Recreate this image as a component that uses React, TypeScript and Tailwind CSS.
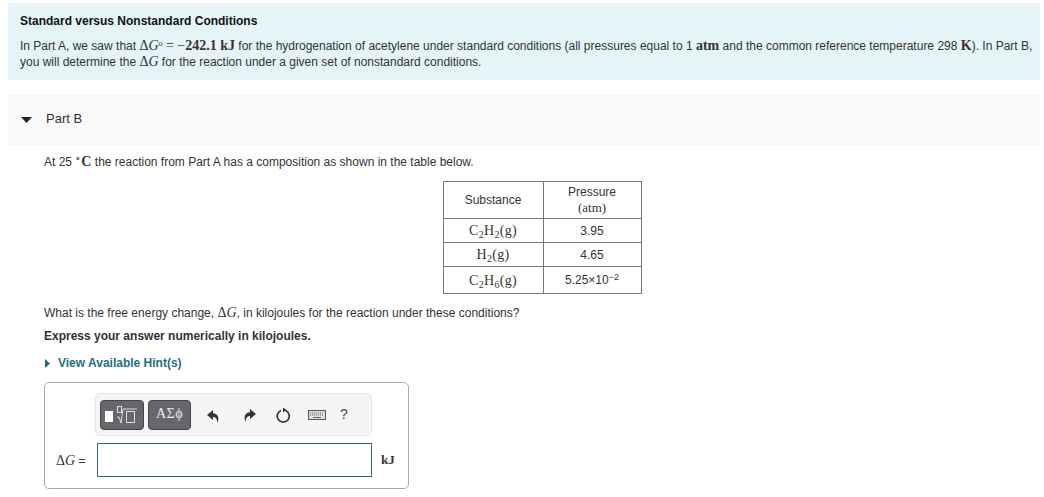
const M = ({ children, b }: { children: React.ReactNode; b?: boolean }) => (
  <span className={`font-['Liberation_Serif',serif] text-[14px] ${b ? "font-bold" : ""}`}>{children}</span>
);
const V = ({ children }: { children: React.ReactNode }) => (
  <span className="font-['Liberation_Serif',serif] text-[14px] italic">{children}</span>
);
const Sub = ({ children }: { children: React.ReactNode }) => (
  <span className="relative top-[3px] text-[10px] leading-[0]">{children}</span>
);
const Chem = ({ children }: { children: React.ReactNode }) => (
  <span className="font-['Liberation_Serif',serif] text-[14px] tracking-[0.3px] text-[#333]">{children}</span>
);

export default function App() {
  return (
    <div className="w-[1044px] h-[497px] bg-white overflow-hidden pt-[3px] pl-[8px] pr-[4px] font-['Liberation_Sans',sans-serif] text-[12px] text-[#333]">
      <div className="bg-[#e5f4f7] h-[77px] pl-[12px] pr-[4px] pt-[11px]">
        <div className="font-bold text-[#111] leading-[15px]">Standard versus Nonstandard Conditions</div>
        <p className="mt-[9px] leading-[16px] whitespace-nowrap">
          In Part A, we saw that <V><span className="not-italic">Δ</span>G</V><sup className="text-[8px] font-['Liberation_Serif',serif] leading-[0]">o</sup> <M>= −</M><M b>242.1 kJ</M> for the hydrogenation of acetylene under standard conditions (all pressures equal to 1 <M b>atm</M> and the common reference temperature 298 <M b>K</M>). In Part B,
          <br />
          you will determine the <V><span className="not-italic">Δ</span>G</V> for the reaction under a given set of nonstandard conditions.
        </p>
      </div>

      <div className="mt-[14px] h-[51px] bg-[#f8f8f8] flex items-center pl-[13px]">
        <svg width="11" height="6" viewBox="0 0 11 6" className="mt-[1px]"><path d="M0 0h11L5.500 6z" fill="#222" /></svg>
        <span className="ml-[14px] text-[13px] leading-[16px] -mt-[2px]">Part B</span>
      </div>

      <div className="pl-[36px]">
        <p className="mt-[9px] leading-[16px]">At 25 <sup className="text-[9px] leading-[0] font-['Liberation_Serif',serif]">∘</sup><M b>C</M> the reaction from Part A has a composition as shown in the table below.</p>

        <div className="flex justify-center mt-[11px]">
          <table className="border-collapse text-center w-[199px] table-fixed">
            <tbody>
              <tr className="h-[37px]">
                <td className="border border-[#777] w-[100px]">Substance</td>
                <td className="border border-[#777] leading-[15px]">Pressure<br /><span className="font-['Liberation_Serif',serif] text-[13px]">(atm)</span></td>
              </tr>
              <tr className="h-[24px]">
                <td className="border border-[#777]"><Chem>C<Sub>2</Sub>H<Sub>2</Sub>(g)</Chem></td>
                <td className="border border-[#777]">3.95</td>
              </tr>
              <tr className="h-[24px]">
                <td className="border border-[#777]"><Chem>H<Sub>2</Sub>(g)</Chem></td>
                <td className="border border-[#777]">4.65</td>
              </tr>
              <tr className="h-[27px]">
                <td className="border border-[#777]"><Chem>C<Sub>2</Sub>H<Sub>6</Sub>(g)</Chem></td>
                <td className="border border-[#777]">5.25×10<sup className="text-[9px] leading-[0]">−2</sup></td>
              </tr>
            </tbody>
          </table>
        </div>

        <p className="mt-[11px] leading-[16px]">What is the free energy change, <V><span className="not-italic">Δ</span>G</V>, in kilojoules for the reaction under these conditions?</p>
        <p className="mt-[7px] leading-[16px] font-bold">Express your answer numerically in kilojoules.</p>
        <div className="mt-[11px] flex items-center h-[16px] text-[#1f6f82] font-bold">
          <svg width="5" height="9" viewBox="0 0 5 9" className="ml-[1px]"><path d="M0 0l5 4.500L0 9z" fill="#1f6f82" /></svg>
          <span className="ml-[8px]">View Available Hint(s)</span>
        </div>

        <div className="mt-[11px] w-[365px] h-[107px] border border-[#aaa] rounded-[5px] pt-[10px] pl-[11px]">
          <div className="ml-[39px] w-[277px] h-[43px] bg-[#f5f5f5] border border-[#e6e6e6] rounded-[5px] flex items-center pl-[4px]">
            <div className="w-[44px] h-[30px] bg-[#66666c] rounded-[4px] border border-[#444] flex items-center justify-center">
              <svg width="36" height="22" viewBox="0 0 36 22" fill="none">
                <rect x="1" y="7" width="8" height="11" fill="#fff" />
                <path d="M13 13l2 0 2 6 2-14h14" stroke="#ddd" strokeWidth="1" />
                <rect x="13.500" y="2.500" width="4" height="6" stroke="#ddd" />
                <rect x="22.500" y="7.500" width="8" height="11" stroke="#ddd" />
              </svg>
            </div>
            <div className="ml-[4px] w-[43px] h-[30px] bg-[#66666c] rounded-[4px] border border-[#444] flex items-center justify-center font-['Liberation_Serif',serif] text-[14px] text-[#eee] tracking-[0.5px] pb-[3px]">ΑΣϕ</div>
            <svg width="13" height="13" viewBox="0 0 13 13" className="ml-[16px] mt-[3px]"><path d="M6 0L0 5l6 5V7c3 0 4 2 4.500 6C12.500 8 11 3.500 6 3.300z" fill="#333" /></svg>
            <svg width="13" height="13" viewBox="0 0 13 13" className="ml-[23px] mt-[1px]"><path d="M7 0l6 5-6 5V7c-3 0-4 2-4.500 6C.5 8 2 3.500 7 3.300z" fill="#333" /></svg>
            <svg width="15" height="16" viewBox="0 0 15 16" fill="none" className="ml-[20px]"><path d="M9.500 3.500A6 6 0 1 1 5 3.500" stroke="#333" strokeWidth="1.700" /><path d="M7 0.500v5l3.500-2.500z" fill="#333" /></svg>
            <svg width="18" height="10" viewBox="0 0 18 10" className="ml-[17px] mt-[1px]"><rect x="0.500" y="0.500" width="17" height="9" fill="#ddd" stroke="#555" /><path d="M2 3h14M2 5h14" stroke="#666" strokeDasharray="1 1" /><path d="M5 7.500h8" stroke="#666" /></svg>
            <span className="ml-[14px] text-[14px] text-[#444]">?</span>
          </div>
          <div className="flex items-center mt-[7px] -ml-[0px]">
            <span className="text-[#333] w-[41px] whitespace-nowrap"><V><span className="not-italic">Δ</span>G</V> =</span>
            <div className="w-[275px] h-[34px] border border-[#2d6a75] bg-white shrink-0" />
            <span className="ml-[9px] font-['Liberation_Serif',serif] text-[13px] font-bold">kJ</span>
          </div>
        </div>
      </div>
    </div>
  );
}
